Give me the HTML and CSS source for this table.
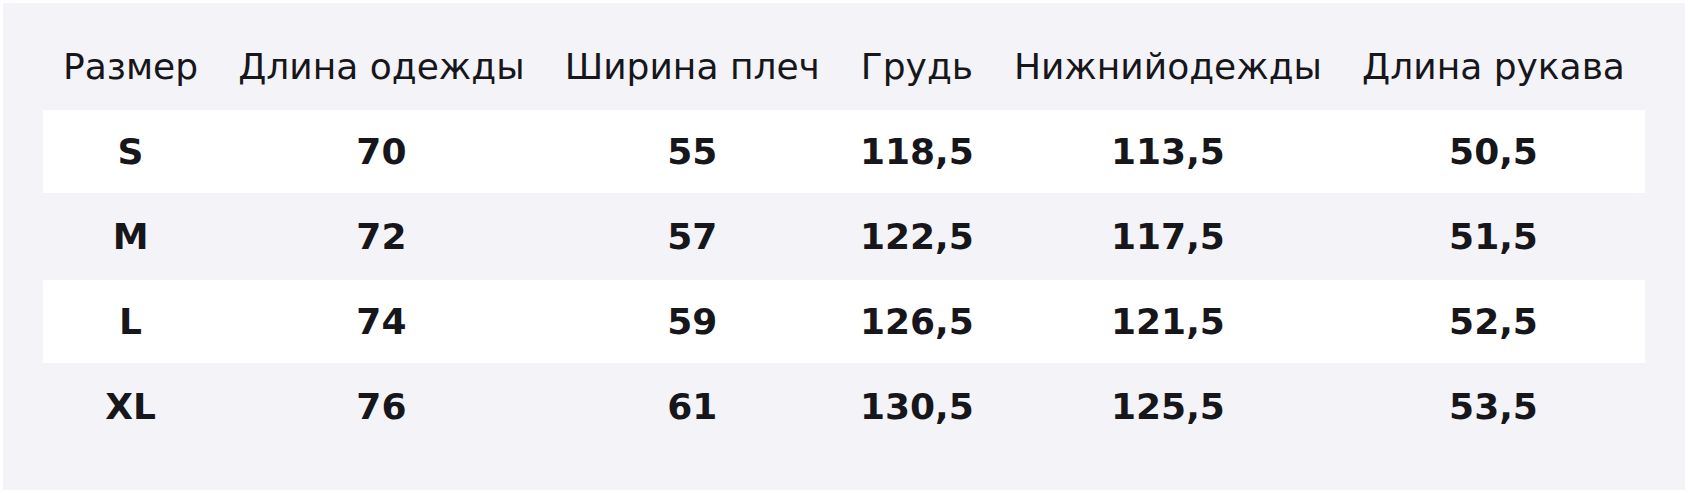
FILE: index.html
```html
<!DOCTYPE html>
<html lang="ru">
<head>
<meta charset="utf-8">
<title>Размеры</title>
<link rel="stylesheet" href="styles.css">
</head>
<body>
<div class="panel">
  <table class="sizes">
    <thead>
      <tr>
        <th>Размер</th>
        <th>Длина одежды</th>
        <th>Ширина плеч</th>
        <th>Грудь</th>
        <th>Нижнийодежды</th>
        <th>Длина рукава</th>
      </tr>
    </thead>
    <tbody>
      <tr class="row-light"><td>S</td><td>70</td><td>55</td><td>118,5</td><td>113,5</td><td>50,5</td></tr>
      <tr class="row-plain"><td>M</td><td>72</td><td>57</td><td>122,5</td><td>117,5</td><td>51,5</td></tr>
      <tr class="row-light"><td>L</td><td>74</td><td>59</td><td>126,5</td><td>121,5</td><td>52,5</td></tr>
      <tr class="row-plain"><td>XL</td><td>76</td><td>61</td><td>130,5</td><td>125,5</td><td>53,5</td></tr>
    </tbody>
  </table>
</div>
</body>
</html>
```

FILE: styles.css
```css
html, body {
  margin: 0;
  padding: 0;
  background: #ffffff;
}

body {
  padding: 3px;
  font-family: "DejaVu Sans", "Noto Sans", sans-serif;
  color: #16161b;
}

.panel {
  width: 1682px;
  height: 487px;
  box-sizing: border-box;
  padding: 40px 40px 40px 40px;
  background: #f4f3f8;
}

.sizes {
  width: 100%;
  border-collapse: collapse;
  border-spacing: 0;
}

.sizes th {
  font-weight: normal;
  font-size: 36px;
  line-height: 42px;
  padding: 3px 20px 22px 20px;
  text-align: center;
  white-space: nowrap;
}

.sizes td {
  font-weight: bold;
  font-size: 36px;
  line-height: 42px;
  padding: 0 20px;
  text-align: center;
  vertical-align: middle;
  white-space: nowrap;
}

.row-light {
  background: #ffffff;
  height: 83px;
}

.row-plain {
  background: transparent;
  height: 87px;
}
```
